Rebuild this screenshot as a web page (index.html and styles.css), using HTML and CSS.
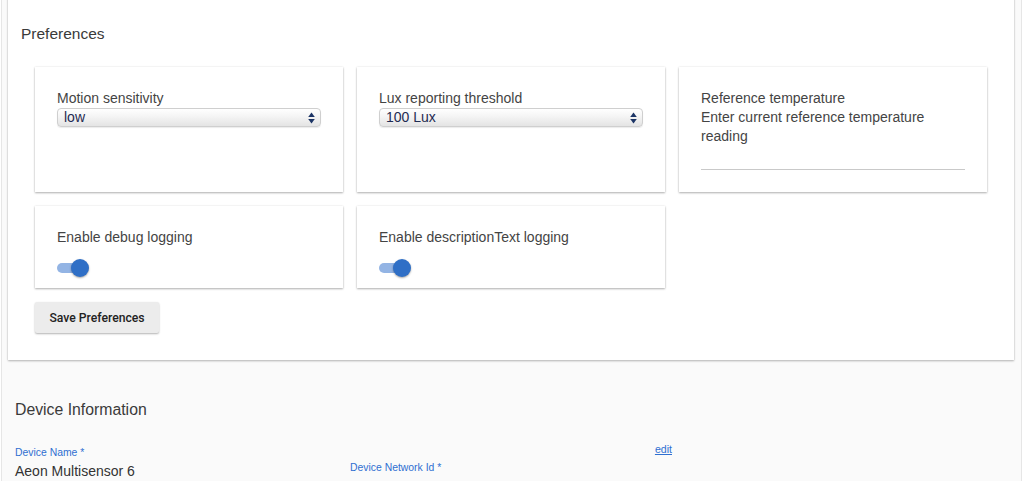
FILE: index.html
```html
<!DOCTYPE html>
<html lang="en">
<head>
<meta charset="utf-8">
<title>Device</title>
<link rel="stylesheet" href="styles.css">
</head>
<body>
<div class="page">
  <section class="panel">
    <h2 class="panel-title">Preferences</h2>
    <div class="cards">
      <div class="card">
        <div class="label">Motion sensitivity</div>
        <div class="select">
          <span class="select-value">low</span>
          <svg class="select-arrows" width="7" height="12" viewBox="0 0 7 12"><path d="M3.5 0.5 L6.8 5 L0.2 5 Z" fill="#1d3566"/><path d="M0.2 7 L6.8 7 L3.5 11.5 Z" fill="#1d3566"/></svg>
        </div>
      </div>
      <div class="card">
        <div class="label">Lux reporting threshold</div>
        <div class="select">
          <span class="select-value">100 Lux</span>
          <svg class="select-arrows" width="7" height="12" viewBox="0 0 7 12"><path d="M3.5 0.5 L6.8 5 L0.2 5 Z" fill="#1d3566"/><path d="M0.2 7 L6.8 7 L3.5 11.5 Z" fill="#1d3566"/></svg>
        </div>
      </div>
      <div class="card">
        <div class="label">Reference temperature</div>
        <div class="label">Enter current reference temperature reading</div>
        <div class="text-input"></div>
      </div>
      <div class="card card-toggle">
        <div class="label">Enable debug logging</div>
        <div class="switch"><span class="track"></span><span class="thumb"></span></div>
      </div>
      <div class="card card-toggle">
        <div class="label">Enable descriptionText logging</div>
        <div class="switch"><span class="track"></span><span class="thumb"></span></div>
      </div>
    </div>
    <button class="btn">Save Preferences</button>
  </section>

  <section class="devinfo">
    <h2 class="section-title">Device Information</h2>
    <div class="info-grid">
      <div class="info-col">
        <div class="field-label first">Device Name *</div>
        <div class="field-value">Aeon Multisensor 6</div>
      </div>
      <div class="info-col">
        <div class="edit-row"><a class="edit-link" href="#">edit</a></div>
        <div class="field-label">Device Network Id *</div>
        <div class="field-value muted">2F</div>
      </div>
      <div class="info-col"></div>
    </div>
  </section>
</div>
</body>
</html>
```

FILE: styles.css
```css
html, body {
  margin: 0;
  padding: 0;
  background: #ffffff;
  overflow: hidden;
}

body {
  font-family: "Liberation Sans", Arial, Helvetica, sans-serif;
  color: #444;
}

.page {
  margin-left: 1px;
  width: 1019px;
  min-height: 600px;
  border-left: 1px solid #e6e6e6;
  border-right: 1px solid #e6e6e6;
  background: #fafafa;
  padding-top: 1px;
}

.panel {
  margin: -5px 7px 0 6px;
  padding: 28px 27px 27px 27px;
  background: #ffffff;
  box-shadow: 0 1px 2px rgba(0, 0, 0, 0.28), 0 0 1px rgba(0, 0, 0, 0.12);
}

.panel-title {
  margin: 0 0 23px -14px;
  font-size: 15.5px;
  line-height: 20px;
  font-weight: normal;
  color: #3a3a3a;
}

.cards {
  display: grid;
  grid-template-columns: repeat(3, 308px);
  column-gap: 14px;
  row-gap: 14px;
}

.card {
  background: #ffffff;
  padding: 22px 22px 22px 22px;
  box-shadow: 0 1px 2px rgba(0, 0, 0, 0.3), 0 0 2px rgba(0, 0, 0, 0.08);
}

.label {
  font-size: 14px;
  line-height: 19px;
  color: #444;
}

.select {
  height: 19px;
  box-sizing: border-box;
  border: 1px solid #cfcfcf;
  border-radius: 4px;
  background: linear-gradient(#ffffff 0%, #f4f4f4 45%, #e4e4e4 100%);
  box-shadow: 0 1px 1px rgba(0, 0, 0, 0.08);
  display: flex;
  align-items: center;
  justify-content: space-between;
  padding: 0 5px 0 6px;
}

.select-value {
  font-size: 14px;
  line-height: 17px;
  color: #1f2b52;
}

.select-arrows {
  display: block;
}

.text-input {
  height: 23px;
  border-bottom: 1px solid #c9c9c9;
}

.card-toggle {
  padding-bottom: 11px;
}

.switch {
  position: relative;
  margin-top: 12px;
  width: 32px;
  height: 18px;
}

.track {
  position: absolute;
  left: 0;
  top: 4px;
  width: 30px;
  height: 10px;
  border-radius: 5px;
  background: #93b4e4;
}

.thumb {
  position: absolute;
  left: 14px;
  top: 0;
  width: 18px;
  height: 18px;
  border-radius: 50%;
  background: #2f6fc6;
  box-shadow: 0 1px 2px rgba(0, 0, 0, 0.35);
}

.btn {
  display: block;
  margin-top: 14px;
  width: 124px;
  height: 31px;
  padding: 0;
  border: none;
  border-radius: 2px;
  background: #ececec;
  box-shadow: 0 1px 2px rgba(0, 0, 0, 0.3);
  font-family: Roboto, "Liberation Sans", Arial, sans-serif;
  font-weight: 500;
  font-size: 12.2px;
  color: #222;
}

.devinfo {
  padding: 0 13px;
}

.section-title {
  margin: 40px 0 0 0;
  font-size: 15.8px;
  line-height: 20px;
  font-weight: normal;
  color: #3a3a3a;
}

.info-grid {
  margin-top: 20px;
  display: grid;
  grid-template-columns: 335px 335px 335px;
}

.info-col {
  padding-right: 13px;
}

.edit-row {
  margin-top: 2px;
  text-align: right;
  font-size: 10.6px;
  line-height: 14px;
}

.edit-link {
  color: #2f6fd1;
  text-decoration: underline;
}

.field-label {
  margin-top: 5px;
  font-size: 10.4px;
  line-height: 14px;
  color: #2f6fd1;
}

.field-label.first {
  margin-top: 6px;
}

.field-value {
  margin-top: 2px;
  font-size: 14px;
  line-height: 19px;
  color: #333;
}

.field-value.muted {
  color: #999;
}
```
